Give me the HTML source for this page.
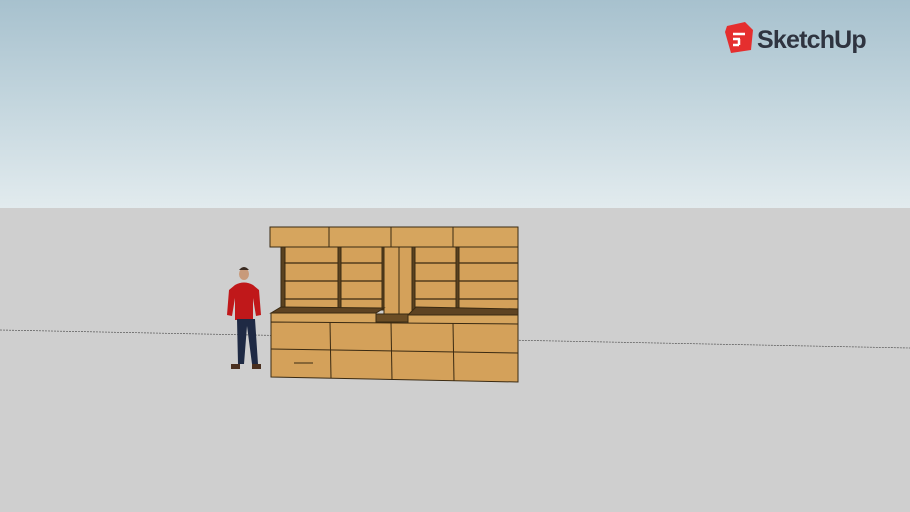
<!DOCTYPE html>
<html><head><style>
html,body{margin:0;padding:0;width:910px;height:512px;overflow:hidden;font-family:"Liberation Sans",sans-serif}
</style></head><body>
<svg width="910" height="512" viewBox="0 0 910 512" xmlns="http://www.w3.org/2000/svg">
<defs>
<linearGradient id="sky" x1="0" y1="0" x2="0" y2="1">
<stop offset="0" stop-color="#a7c1ce"/>
<stop offset="0.5" stop-color="#c4d6de"/>
<stop offset="1" stop-color="#e2ebee"/>
</linearGradient>
</defs>
<rect width="910" height="208" fill="url(#sky)"/>
<rect y="208" width="910" height="304" fill="#cfcfcf"/>
<line x1="0" y1="330" x2="910" y2="348" stroke="#555" stroke-width="0.7" stroke-dasharray="2,1"/>
<g stroke="#3a2a12" stroke-width="1">
<rect x="281" y="246" width="237" height="64" fill="#d4a15a"/>
<rect x="281" y="246" width="4" height="64" fill="#5a4220"/>
<g stroke-width="1.2">
<line x1="284" y1="263" x2="518" y2="263"/>
<line x1="284" y1="281" x2="518" y2="281"/>
<line x1="284" y1="299" x2="518" y2="299"/>
</g>
<rect x="338" y="246" width="3" height="64" fill="#5a4220"/>
<rect x="382" y="246" width="3" height="64" fill="#5a4220"/>
<rect x="384" y="246" width="29" height="68" fill="#d4a15a"/>
<line x1="399" y1="246" x2="399" y2="314"/>
<rect x="412" y="246" width="3" height="64" fill="#5a4220"/>
<rect x="456" y="246" width="3" height="64" fill="#5a4220"/>
<rect x="270" y="227" width="248" height="20" fill="#d6a55e"/>
<line x1="329" y1="227" x2="329" y2="247"/>
<line x1="391" y1="227" x2="391" y2="247"/>
<line x1="453" y1="227" x2="453" y2="247"/>
<polygon points="271,313 281,307 384,308 376,313" fill="#5e4322"/>
<polygon points="408,315 416,307 518,309 518,315" fill="#5e4322"/>
<rect x="376" y="314" width="32" height="8" fill="#6b4d25"/>
<rect x="271" y="313" width="105" height="10" fill="#d6a55e"/>
<rect x="408" y="315" width="110" height="10" fill="#d6a55e"/>
<polygon points="271,322 518,324 518,382 271,377" fill="#d4a15a"/>
<line x1="271" y1="349" x2="518" y2="353"/>
<line x1="330" y1="322" x2="331" y2="378"/>
<line x1="391" y1="322" x2="392" y2="380"/>
<line x1="453" y1="323" x2="454" y2="381"/>
<line x1="294" y1="363" x2="313" y2="363"/>
</g>
<g>
<ellipse cx="244" cy="274" rx="5" ry="6" fill="#c89a7a"/>
<path d="M239 270 q5 -6 10 0" fill="#3a2a20"/>
<path d="M235 285 q9 -5 18 0 l6 5 2 25 -5 1 -3 -18 0 22 -18 0 0 -22 -3 18 -5 -1 2 -25z" fill="#c0181a"/>
<path d="M237 319 l18 0 3 45 -6 0 -5 -38 -3 38 -6 0z" fill="#1f2a44"/>
<rect x="231" y="364" width="9" height="5" fill="#4a3020"/>
<rect x="252" y="364" width="9" height="5" fill="#4a3020"/>
</g>
<g transform="translate(725,22)">
<polygon points="2,4 20,0 28,8 26,28 6,31 0,10" fill="#e52e2e"/>
<path d="M8 12 h12 M8 17 h7 M14 17 v6 M8 23 h6" stroke="#fff" stroke-width="2.5" fill="none"/>
</g>
<text x="757" y="48" font-family="Liberation Sans,sans-serif" font-weight="bold" font-size="25" fill="#2f3440" letter-spacing="-0.8">SketchUp</text>
</svg>
</body></html>
